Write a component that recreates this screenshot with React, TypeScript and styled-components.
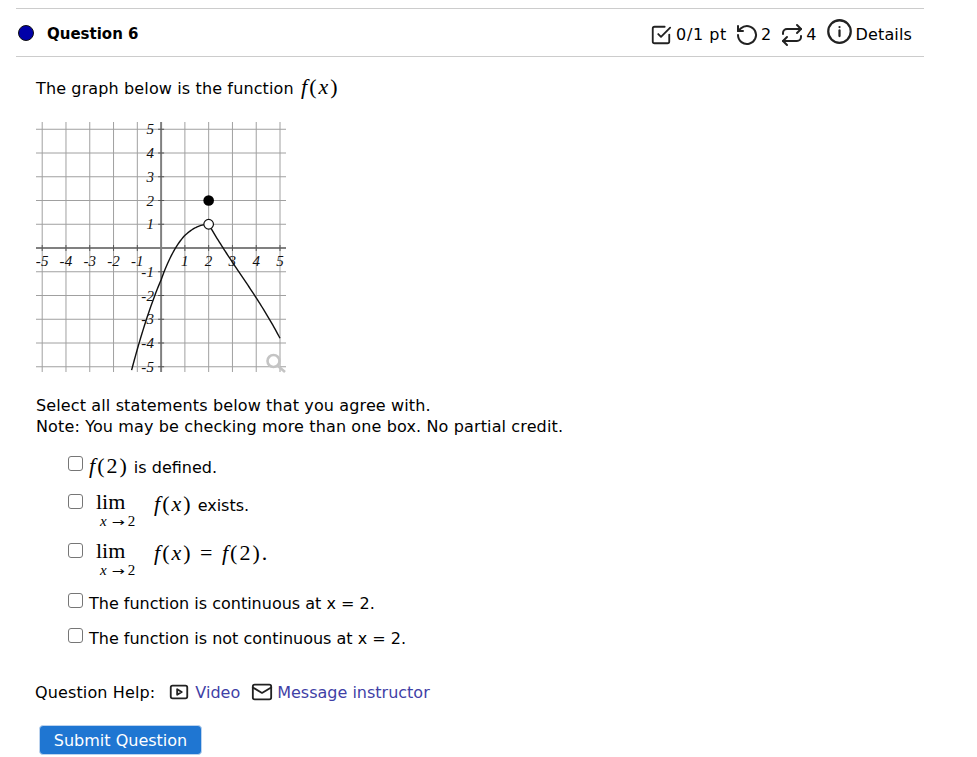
import React from 'react';
import styled, { createGlobalStyle } from 'styled-components';

const GlobalStyle = createGlobalStyle`
  html, body {
    margin: 0;
    padding: 0;
    background: #fff;
    color: #000;
    font-family: "DejaVu Sans", "Noto Sans", sans-serif;
    font-size: 16px;
    letter-spacing: 0.13px;
  }
`;

const Page = styled.div`
  width: 908px;
  margin-left: 16px;
  padding-top: 8px;
`;

const Header = styled.header`
  display: flex;
  align-items: center;
  justify-content: space-between;
  height: 47px;
  border-top: 1px solid #ccc;
  border-bottom: 1px solid #ccc;
  padding: 0 12px 0 2px;
`;

const HeaderLeft = styled.div`
  display: flex;
  align-items: center;
  gap: 13px;
`;

const StatusDot = styled.span`
  width: 14px;
  height: 14px;
  border-radius: 50%;
  background: #0000a8;
  border: 1px solid #111;
`;

const QuestionTitle = styled.h2`
  margin: 0;
  padding-top: 3px;
  font-size: 15px;
  font-weight: 700;
  letter-spacing: 0;
`;

const Meta = styled.div`
  display: flex;
  align-items: center;
  gap: 9px;
`;

const MetaItem = styled.span`
  display: inline-flex;
  align-items: center;
  gap: 2px;
  padding-top: 4px;
`;

const ScoreItem = styled(MetaItem)`
  gap: 4px;
  margin-right: -1px;
  letter-spacing: 0.6px;
`;

const InfoIcon = styled.span`
  display: inline-flex;
  margin-top: -7px;
  margin-right: 1px;
`;

const Body = styled.div`
  padding: 19px 20px 0;
`;

const Para = styled.p`
  margin: 0;
  line-height: 21px;
`;

const MathText = styled.span`
  font-family: "Liberation Serif", serif;
  font-size: 22px;
  letter-spacing: 2px;

  ${Para} & {
    margin-left: 2px;
  }
`;

const MathVar = styled.i`
  font-family: "Liberation Serif", serif;
`;

const GraphWrap = styled.div`
  margin-top: 23px;
  height: 250px;
`;

const Statements = styled.div`
  margin-top: 23px;
`;

const Options = styled.div`
  display: flex;
  flex-direction: column;
  margin: 15px 0 0 32px;
`;

const Option = styled.label<{ $h: number }>`
  display: flex;
  align-items: flex-start;
  height: ${({ $h }) => $h}px;
  line-height: 28px;
  letter-spacing: 0;
`;

const OptionText = styled.span`
  line-height: 30px;
`;

const Box = styled.span`
  flex: none;
  width: 13px;
  height: 13px;
  margin: 4px 6px 0 0;
  border: 1px solid #767676;
  border-radius: 3px;
  background: #fff;
`;

const Lim = styled.span`
  display: inline-flex;
  flex-direction: column;
  align-items: flex-start;
  width: 40px;
  margin: 0 18px 0 7px;
  font-family: "Liberation Serif", serif;
  font-size: 22px;
  line-height: 24px;
`;

const LimSub = styled.span`
  font-size: 15px;
  line-height: 16px;
  margin: -1px 0 0 4px;
  white-space: nowrap;
`;

const LimArrow = styled.span`
  display: inline-block;
  margin: 0 5px 0 6px;
  font-family: "DejaVu Sans", sans-serif;
  font-size: 12px;
  transform: scaleX(1.3);
`;

const Help = styled.div`
  display: flex;
  align-items: center;
  height: 24px;
  margin: 21px 0 0 -1px;
`;

const HelpLink = styled.a`
  display: inline-flex;
  align-items: center;
  gap: 5px;
  margin-left: 13px;
  color: #3f3fa6;
  letter-spacing: 0;
  text-decoration: none;

  & + & {
    gap: 4px;
    margin-left: 11px;
  }
`;

const SubmitButton = styled.button`
  display: block;
  margin: 21px 0 0 3px;
  width: 163px;
  height: 30px;
  padding: 0;
  border: 1px solid #bcd3ee;
  border-radius: 4px;
  background: #1f76d2;
  color: #fff;
  font-family: inherit;
  font-size: 16px;
  font-weight: 400;
`;

const Icon = ({ children, size = 24 }: { children: React.ReactNode; size?: number }) => (
  <svg
    width={size}
    height={size}
    viewBox="0 0 24 24"
    fill="none"
    stroke="#222"
    strokeWidth={2}
    strokeLinecap="round"
    strokeLinejoin="round"
  >
    {children}
  </svg>
);

const UX = 23.78;
const UY = 23.75;
const X0 = 125.1;
const Y0 = 126;
const px = (x: number) => X0 + x * UX;
const py = (y: number) => Y0 - y * UY;
const ticks = [-5, -4, -3, -2, -1, 1, 2, 3, 4, 5];

// left branch: parabola that gets a bit steeper below the x axis
const leftY = (x: number) => {
  const k = Math.min(1, Math.max(0, 1 - x));
  const a = 0.47 + 0.115 * k;
  return 1 - a * (x - 2) * (x - 2);
};
// right branch: nearly straight, small bulge around x = 4
const rightY = (x: number) => {
  const t = x - 2;
  return 1 - 1.6 * t + 0.05 * t * (t - 1) * (3 - t);
};
const sample = (from: number, to: number, f: (x: number) => number) => {
  const out: string[] = [];
  for (let i = 0; i <= 60; i++) {
    const x = from + ((to - from) * i) / 60;
    out.push(`${px(x).toFixed(2)},${py(f(x)).toFixed(2)}`);
  }
  return out.join(' ');
};

const Graph = () => (
  <svg width={252} height={256} viewBox="0 0 252 256">
    {ticks.map((t) => (
      <g key={t} stroke="#a0a0a0" strokeWidth={1}>
        <line x1={px(t)} x2={px(t)} y1={0} y2={250} />
        <line y1={py(t)} y2={py(t)} x1={0} x2={250} />
      </g>
    ))}
    <line x1={0} x2={250} y1={Y0} y2={Y0} stroke="#808080" strokeWidth={2} />
    <line x1={X0} x2={X0} y1={0} y2={250} stroke="#808080" strokeWidth={2} />
    {ticks.map((t) => (
      <g key={t} stroke="#555" strokeWidth={1}>
        <line x1={px(t)} x2={px(t)} y1={Y0 - 3} y2={Y0 + 3} />
        <line y1={py(t)} y2={py(t)} x1={X0 - 3} x2={X0 + 3} />
      </g>
    ))}
    <g fontFamily="Liberation Serif, serif" fontStyle="italic" fontSize={15} fill="#111">
      {ticks.map((t) => (
        <text key={t} x={px(t)} y={Y0 + 18} textAnchor="middle">{t}</text>
      ))}
      {ticks.map((t) => (
        <text key={t} x={X0 - 7} y={py(t) + 5} textAnchor="end">{t}</text>
      ))}
    </g>
    <polyline points={sample(-1.24, 2, leftY)} fill="none" stroke="#111" strokeWidth={1.4} />
    <polyline points={sample(2, 5, rightY)} fill="none" stroke="#111" strokeWidth={1.4} />
    <circle cx={px(2)} cy={py(2)} r={5.3} fill="#000" />
    <circle cx={px(2)} cy={py(1)} r={4.8} fill="#fff" stroke="#111" strokeWidth={1.2} />
    <circle cx={237.5} cy={239} r={6} fill="none" stroke="#c4c4c4" strokeWidth={2.6} />
    <line x1={242} y1={244} x2={249} y2={250} stroke="#c4c4c4" strokeWidth={2.6} />
  </svg>
);

const Fx = () => (
  <MathText>
    <MathVar>f</MathVar>(<MathVar>x</MathVar>)
  </MathText>
);

const LimBlock = () => (
  <Lim>
    lim
    <LimSub>
      <MathVar>x</MathVar>
      <LimArrow>→</LimArrow>2
    </LimSub>
  </Lim>
);

export default function App() {
  return (
    <Page>
      <GlobalStyle />
      <Header>
        <HeaderLeft>
          <StatusDot />
          <QuestionTitle>Question 6</QuestionTitle>
        </HeaderLeft>
        <Meta>
          <ScoreItem>
            <Icon size={22}>
              <path d="M21 11.5V19a2 2 0 0 1-2 2H5a2 2 0 0 1-2-2V5a2 2 0 0 1 2-2h11" />
              <path d="m9 11 3 3L22 4" />
            </Icon>
            0/1 pt
          </ScoreItem>
          <MetaItem>
            <Icon>
              <path d="M3 12a9 9 0 1 0 3-6.7L3 8" />
              <path d="M3 3v5h5" />
            </Icon>
            2
          </MetaItem>
          <MetaItem>
            <Icon>
              <path d="m17 2 4 4-4 4" />
              <path d="M3 11v-1a4 4 0 0 1 4-4h14" />
              <path d="m7 22-4-4 4-4" />
              <path d="M21 13v1a4 4 0 0 1-4 4H3" />
            </Icon>
            4
          </MetaItem>
          <MetaItem>
            <InfoIcon>
              <Icon size={27}>
                <circle cx="12" cy="12" r="10" />
                <path d="M12 16v-5" />
                <path d="M12 8h.01" />
              </Icon>
            </InfoIcon>
            Details
          </MetaItem>
        </Meta>
      </Header>
      <Body>
        <Para>
          The graph below is the function <Fx />
        </Para>
        <GraphWrap>
          <Graph />
        </GraphWrap>
        <Statements>
          <Para>Select all statements below that you agree with.</Para>
          <Para>Note: You may be checking more than one box. No partial credit.</Para>
        </Statements>
        <Options>
          <Option $h={38}>
            <Box />
            <span>
              <MathText><MathVar>f</MathVar>(2)</MathText> is defined.
            </span>
          </Option>
          <Option $h={49}>
            <Box />
            <LimBlock />
            <span>
              <Fx /> exists.
            </span>
          </Option>
          <Option $h={50}>
            <Box />
            <LimBlock />
            <span>
              <MathText>
                <MathVar>f</MathVar>(<MathVar>x</MathVar>) = <MathVar>f</MathVar>(2).
              </MathText>
            </span>
          </Option>
          <Option $h={35}>
            <Box />
            <OptionText>The function is continuous at x = 2.</OptionText>
          </Option>
          <Option $h={35}>
            <Box />
            <OptionText>The function is not continuous at x = 2.</OptionText>
          </Option>
        </Options>
        <Help>
          Question Help:
          <HelpLink href="#">
            <Icon size={22}>
              <rect x="3" y="5" width="18" height="14" rx="2" />
              <path d="m10 9 5 3-5 3z" />
            </Icon>
            Video
          </HelpLink>
          <HelpLink href="#">
            <Icon size={22}>
              <rect x="2" y="4" width="20" height="16" rx="2" />
              <path d="m22 7-10 6L2 7" />
            </Icon>
            Message instructor
          </HelpLink>
        </Help>
        <SubmitButton>Submit Question</SubmitButton>
      </Body>
    </Page>
  );
}
